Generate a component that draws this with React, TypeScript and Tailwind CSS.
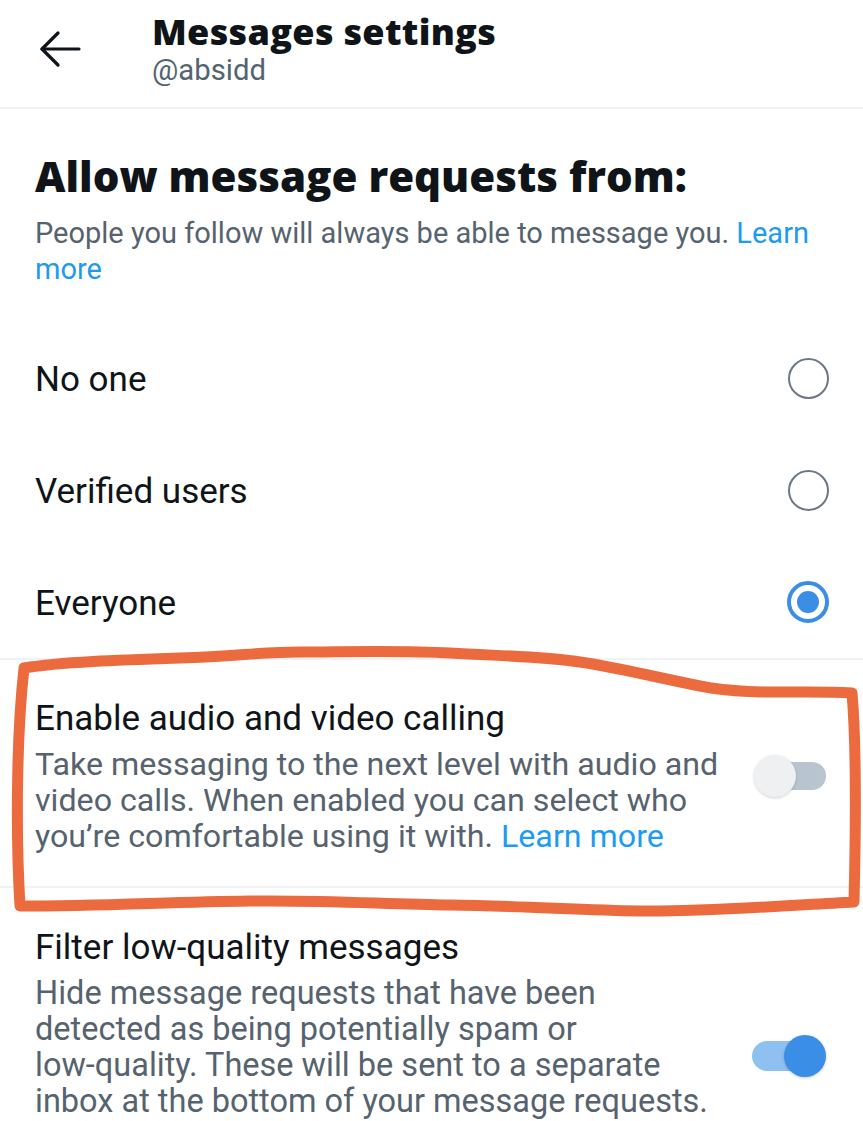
import React from "react";

function Radio({ checked }: { checked?: boolean }) {
  if (checked) {
    return (
      <div className="w-[42px] h-[42px] rounded-full border-[4px] border-[#3a8ee6] flex items-center justify-center">
        <div className="w-[22px] h-[22px] rounded-full bg-[#3a8ee6]" />
      </div>
    );
  }
  return <div className="w-[41px] h-[41px] rounded-full border-[2.5px] border-[#6b7884]" />;
}

function ToggleOff() {
  return (
    <div className="relative w-[72px] h-[44px] flex items-center">
      <div className="absolute left-[22px] right-0 h-[28px] rounded-full bg-[#b8c5cf]" />
      <div className="absolute left-0 w-[42px] h-[42px] rounded-full bg-[#eef0f2] shadow-[0_1px_3px_rgba(0,0,0,0.18)]" />
    </div>
  );
}

function ToggleOn() {
  return (
    <div className="relative w-[74px] h-[44px] flex items-center">
      <div className="absolute left-0 right-[16px] h-[30px] rounded-full bg-[#8ec1f1]" />
      <div className="absolute right-0 w-[42px] h-[42px] rounded-full bg-[#3a8ee6] shadow-[0_1px_3px_rgba(0,0,0,0.2)]" />
    </div>
  );
}

const heading = { fontFamily: "'Open Sans', Roboto, sans-serif" };

export default function App() {
  const font = { fontFamily: "Roboto, 'Noto Sans', sans-serif" };
  return (
    <div className="relative w-[863px] h-[1121px] overflow-hidden bg-white text-[#0f1419]" style={font}>
      {/* Header */}
      <div className="h-[107px] flex">
        <div className="w-[152px] flex items-start pt-[30px] pl-[38px]">
          <svg width="44" height="38" viewBox="0 0 44 38" fill="none" stroke="#0f1419" strokeWidth="3.2" strokeLinecap="round" strokeLinejoin="round">
            <path d="M41 19H4" />
            <path d="M20 3L4 19l16 16" />
          </svg>
        </div>
        <div className="flex flex-col pt-[8px]">
          <div className="text-[36px] leading-[47px] font-extrabold tracking-[0.3px]" style={heading}>
            Messages settings
          </div>
          <div className="text-[29.3px] leading-[34px] text-[#536471] mt-[-2px]">@absidd</div>
        </div>
      </div>
      <div className="h-[2px] bg-[#eff3f4]" />

      {/* Allow section */}
      <div className="px-[35px] pt-[39px]">
        <div className="text-[42px] leading-[56px] font-extrabold" style={heading}>
          Allow message requests from:
        </div>
        <div className="mt-[11px] text-[29px] leading-[36px] text-[#56636e]">
          People you follow will always be able to message you.{" "}
          <span className="text-[#1d9bf0]">Learn more</span>
        </div>
      </div>

      <div className="mt-[35px]">
        {[
          { label: "No one", checked: false },
          { label: "Verified users", checked: false },
          { label: "Everyone", checked: true },
        ].map((o) => (
          <div key={o.label} className="h-[112px] flex items-center justify-between pl-[35px] pr-[34px]">
            <span className="text-[35px] pt-[4px]">{o.label}</span>
            <Radio checked={o.checked} />
          </div>
        ))}
      </div>
      <div className="h-[2px] bg-[#eff3f4]" />

      {/* Audio/video */}
      <div className="flex items-start justify-between pl-[35px] pr-[37px] pt-[39px] pb-[32px]">
        <div>
          <div className="text-[35px] leading-[40px]">Enable audio and video calling</div>
          <div className="mt-[7px] text-[32.2px] leading-[36px] text-[#56636e]">
            Take messaging to the next level with audio and
            <br />
            video calls. When enabled you can select who
            <br />
            you’re comfortable using it with. <span className="text-[#1d9bf0]">Learn more</span>
          </div>
        </div>
        <div className="mt-[55px]">
          <ToggleOff />
        </div>
      </div>
      <div className="h-[2px] bg-[#eff3f4]" />

      {/* Filter */}
      <div className="flex items-start justify-between pl-[35px] pr-[37px] pt-[40px]">
        <div>
          <div className="text-[35px] leading-[40px]">Filter low-quality messages</div>
          <div className="mt-[7px] text-[32.5px] leading-[36px] text-[#56636e]">
            Hide message requests that have been
            <br />
            detected as being potentially spam or
            <br />
            low-quality. These will be sent to a separate
            <br />
            inbox at the bottom of your message requests.
          </div>
        </div>
        <div className="mt-[106px]">
          <ToggleOn />
        </div>
      </div>

      {/* Hand-drawn orange annotation */}
      <svg className="absolute left-0 top-0 pointer-events-none" width="863" height="1121" viewBox="0 0 863 1121" fill="none">
        <path
          d="M24 668 C 60 662, 120 660, 180 658 S 260 652, 300 652 S 400 650, 450 653 S 540 656, 580 662 S 650 676, 700 686 S 800 690, 852 693 C 856 740, 856 820, 854 902 C 780 906, 700 912, 640 911 S 520 906, 450 905 S 330 900, 250 901 S 100 906, 20 906 C 16 840, 16 740, 24 668 Z"
          stroke="#ec6b3e"
          strokeWidth="11"
          strokeLinejoin="round"
          strokeLinecap="round"
        />
      </svg>
    </div>
  );
}
